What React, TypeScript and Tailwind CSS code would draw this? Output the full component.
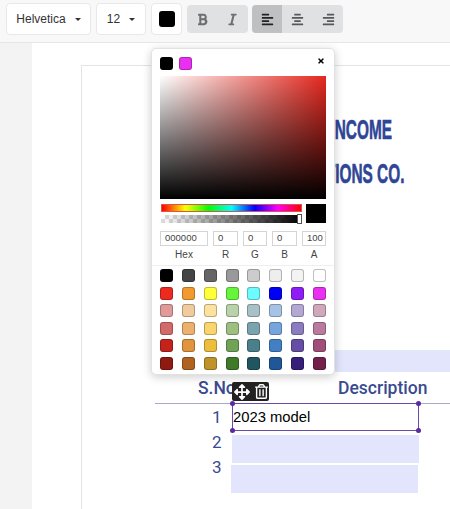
import { FaAlignCenter, FaAlignLeft, FaAlignRight, FaArrowsAlt, FaBold, FaItalic, FaRegTrashAlt, FaTimes } from 'react-icons/fa';

const swatches = [
  ['bg-[#000000]', 'bg-[#444444]', 'bg-[#666666]', 'bg-[#999999]', 'bg-[#cccccc]', 'bg-[#eeeeee]', 'bg-[#f3f3f3]', 'bg-[#ffffff]'],
  ['bg-[#ee2a20]', 'bg-[#f39a2f]', 'bg-[#ffff3b]', 'bg-[#66f53a]', 'bg-[#6cfbfe]', 'bg-[#0000f5]', 'bg-[#8e1df5]', 'bg-[#e92ff0]'],
  ['bg-[#e09a9a]', 'bg-[#f0cb9f]', 'bg-[#fbe29f]', 'bg-[#b9d2aa]', 'bg-[#a7c1c6]', 'bg-[#a6c3e6]', 'bg-[#b3a8d4]', 'bg-[#cfa8bb]'],
  ['bg-[#d26a6a]', 'bg-[#ecb16f]', 'bg-[#fad46c]', 'bg-[#9bc080]', 'bg-[#7ba3ae]', 'bg-[#76a4dc]', 'bg-[#8b7cc2]', 'bg-[#b97a9e]'],
  ['bg-[#c3231b]', 'bg-[#e1933e]', 'bg-[#ecbe3c]', 'bg-[#70a356]', 'bg-[#4a7f8b]', 'bg-[#437fc4]', 'bg-[#664ea5]', 'bg-[#a04f78]'],
  ['bg-[#8f1a12]', 'bg-[#b0621f]', 'bg-[#c0932a]', 'bg-[#3f7a2b]', 'bg-[#1f5660]', 'bg-[#1f5798]', 'bg-[#351f78]', 'bg-[#741f4a]'],
];

const fields = [
  { label: 'Hex', value: '000000', width: 'w-[48px]' },
  { label: 'R', value: '0', width: 'w-[25px]' },
  { label: 'G', value: '0', width: 'w-[24px]' },
  { label: 'B', value: '0', width: 'w-[25px]' },
  { label: 'A', value: '100', width: 'w-[24px]' },
];

function Caret() {
  return <span className="ml-[9px] mt-px h-0 w-0 border-x-[3.5px] border-t-[3.5px] border-x-transparent border-t-[#333]" />;
}

function ColorPicker() {
  return (
    <div className="absolute left-[119px] top-[5px] z-20 flex w-[184px] flex-col rounded-[5px] border border-[#e2e2e2] bg-white px-[8px] pb-[4px] pt-[8px] shadow-[0_2px_10px_rgba(0,0,0,0.2)]">
      <div className="flex h-[13px] items-center gap-[6px]">
        <span className="h-[13px] w-[13px] rounded-[3px] border border-black/25 bg-black" />
        <span className="h-[13px] w-[13px] rounded-[3px] border border-black/25 bg-[#e92ff0]" />
        <FaTimes className="ml-auto mr-px h-[8px] w-[8px] -translate-y-[3px] text-black" />
      </div>
      <div className="mt-[6px] h-[123px] w-full bg-[linear-gradient(to_top,#000,transparent),linear-gradient(to_right,#fff,#e5281f)]" />
      <div className="mt-[5px] flex gap-[4px]">
        <div className="flex w-[142px] flex-col gap-[3px] pl-px">
          <div className="h-[8px] border border-[#d8554f] bg-[linear-gradient(to_right,#f00,#ff0,#0f0,#0ff,#00f,#f0f,#f00)]" />
          <div className="relative h-[8px] bg-[linear-gradient(to_right,transparent,#000),repeating-conic-gradient(#ddd_0_25%,#fff_0_50%)] bg-[length:100%_100%,8px_8px]">
            <span className="absolute right-0 top-[-1px] h-[10px] w-[5px] border border-[#555] bg-white" />
          </div>
        </div>
        <div className="h-[19px] w-[20px] bg-black" />
      </div>
      <div className="mt-[8px] flex gap-[5px]">
        {fields.map((f) => (
          <div key={f.label} className={`flex flex-col items-center ${f.width}`}>
            <div className="flex h-[15px] w-full items-center border border-[#d5d5d5] px-[4px] text-[9.5px] text-[#444]">{f.value}</div>
            <span className="mt-[3px] text-[10px] leading-[12px] text-[#444]">{f.label}</span>
          </div>
        ))}
      </div>
      <div className="-mx-[8px] mt-[4px] border-t border-[#efefef]" />
      <div className="mt-[3px] flex flex-col gap-[4.6px]">
        {swatches.map((row, i) => (
          <div key={i} className="flex justify-between">
            {row.map((c) => (
              <span key={c} className={`h-[13px] w-[13px] rounded-[3px] border border-black/25 ${c}`} />
            ))}
          </div>
        ))}
      </div>
    </div>
  );
}

export default function App() {
  return (
    <div className="flex h-[509px] w-[450px] flex-col overflow-hidden bg-white font-['Liberation_Sans',sans-serif]">
      {/* Toolbar */}
      <div className="flex h-[43px] items-start border-b border-[#e6e6e6] bg-[#f8f8f8] pl-[6px] pt-[3px]">
        <button className="flex h-[32px] w-[85px] items-center justify-center rounded-[4px] border border-[#e8e8e8] bg-white text-[12px] text-[#333]">
          Helvetica
          <Caret />
        </button>
        <button className="ml-[5px] flex h-[32px] w-[50px] items-center justify-center rounded-[4px] border border-[#e8e8e8] bg-white text-[12px] text-[#333]">
          12
          <Caret />
        </button>
        <button className="ml-[5px] flex h-[32px] w-[31px] items-center justify-center rounded-[4px] border border-[#e8e8e8] bg-white">
          <span className="h-[16px] w-[16px] rounded-[3px] bg-black" />
        </button>
        <div className="ml-[5px] mt-[2px] flex h-[28px] w-[61px] items-center rounded-[4px] bg-[#e0e1e3] text-[#6b6e73]">
          <span className="flex w-[30px] justify-center">
            <FaBold className="h-[13px] w-[13px]" />
          </span>
          <span className="flex w-[31px] justify-center">
            <FaItalic className="h-[13px] w-[13px]" />
          </span>
        </div>
        <div className="ml-[4px] mt-[2px] flex h-[28px] w-[91px] overflow-hidden rounded-[4px] bg-[#e0e1e3] text-[#55585c]">
          <span className="flex w-[30px] items-center justify-center bg-[#bfc0c2] text-[#222]">
            <FaAlignLeft className="h-[13px] w-[13px]" />
          </span>
          <span className="flex w-[31px] items-center justify-center">
            <FaAlignCenter className="h-[13px] w-[13px]" />
          </span>
          <span className="flex w-[30px] items-center justify-center">
            <FaAlignRight className="h-[13px] w-[13px]" />
          </span>
        </div>
      </div>

      {/* Editor */}
      <div className="flex min-h-0 flex-1">
        <div className="w-[32px] bg-[#f3f3f3]" />
        <div className="relative flex-1 overflow-hidden bg-white">
          {/* PDF page on its canvas */}
          <div className="absolute left-[49px] top-[22px] h-[500px] w-[400px] border-l border-t border-[#e4e4e4]" />
          <div className="absolute left-[160px] top-[72px] w-[200px] origin-top-right scale-x-[0.57] whitespace-nowrap text-right text-[27px] font-bold leading-[30px] text-[#2f4596] [-webkit-text-stroke:0.6px_#2f4596]">
            INCOME
          </div>
          <div className="absolute left-[172px] top-[116px] w-[200px] -translate-x-[7px] origin-top-right scale-x-[0.57] whitespace-nowrap text-right text-[27px] font-bold leading-[30px] text-[#2f4596] [-webkit-text-stroke:0.6px_#2f4596]">
            SOLUTIONS CO.
          </div>
          <div className="absolute left-[303px] top-[307px] h-[22px] w-[115px] bg-[#e2e5fb]" />
          <span className="absolute left-[166px] top-[335px] font-['Roboto',sans-serif] text-[17.5px] font-medium leading-[20px] text-[#3a4a90]">S.No</span>
          <span className="absolute left-[306px] top-[335px] font-['Roboto',sans-serif] text-[17.5px] font-medium leading-[20px] text-[#3a4a90]">Description</span>
          <div className="absolute left-[123px] top-[360px] h-px w-[295px] bg-[#a8a8c8]" />
          <span className="absolute left-[180px] top-[364px] font-['Roboto',sans-serif] text-[17px] leading-[20px] text-[#3a4a90]">1</span>
          <span className="absolute left-[180px] top-[389px] font-['Roboto',sans-serif] text-[17px] leading-[20px] text-[#3a4a90]">2</span>
          <span className="absolute left-[180px] top-[414px] font-['Roboto',sans-serif] text-[17px] leading-[20px] text-[#3a4a90]">3</span>
          <div className="absolute left-[200px] top-[392px] h-[28px] w-[187px] bg-[#e2e5fb]" />
          <div className="absolute left-[199px] top-[422px] h-[28px] w-[187px] bg-[#e2e5fb]" />

          {/* Selected field */}
          <div className="absolute left-[200px] top-[360px] flex h-[28px] w-[187px] items-center border border-[#6a4ca8] pt-px text-[14.8px] text-black">
            2023 model
            <span className="absolute -left-[3px] -top-[3px] h-[5px] w-[5px] rounded-full bg-[#5b2a9e]" />
            <span className="absolute -right-[3px] -top-[3px] h-[5px] w-[5px] rounded-full bg-[#5b2a9e]" />
            <span className="absolute -bottom-[3px] -left-[3px] h-[5px] w-[5px] rounded-full bg-[#5b2a9e]" />
            <span className="absolute -bottom-[3px] -right-[3px] h-[5px] w-[5px] rounded-full bg-[#5b2a9e]" />
          </div>
          <div className="absolute left-[200px] top-[339px] flex h-[19px] w-[37px] items-center justify-center gap-[5px] rounded-[2px] bg-[#222] text-white">
            <FaArrowsAlt className="h-[16px] w-[16px]" />
            <FaRegTrashAlt className="h-[15px] w-[13px]" />
          </div>

          <ColorPicker />
        </div>
      </div>
    </div>
  );
}
